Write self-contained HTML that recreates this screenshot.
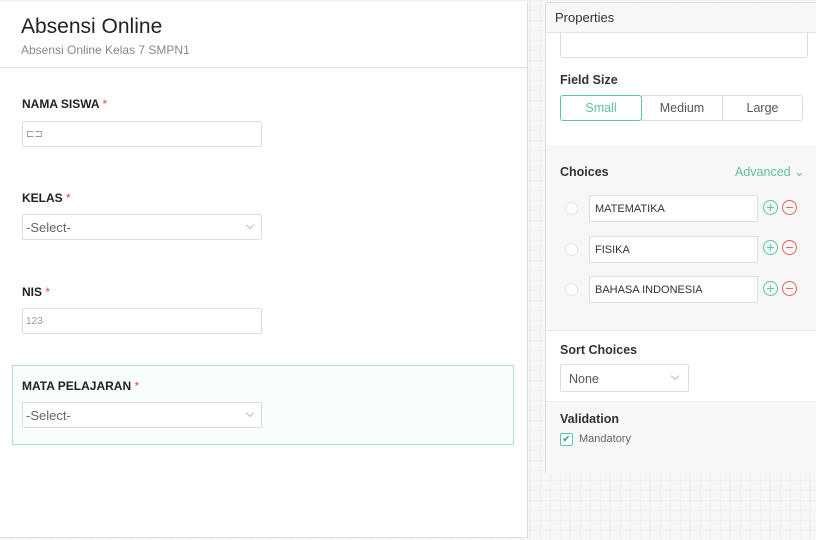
<!DOCTYPE html>
<html><head><style>
*{box-sizing:border-box;margin:0;padding:0}
body{width:816px;height:540px;overflow:hidden;font-family:"Liberation Sans",sans-serif;background:#f7f7f7;
background-image:linear-gradient(#f0f0f0 1px,transparent 1px),linear-gradient(90deg,#f0f0f0 1px,transparent 1px);background-size:10px 10px;position:relative}
.abs{position:absolute}
#left{left:0;top:2px;width:528px;height:536px;background:#fff;border-right:1px solid #ddd;border-bottom:1px solid #ddd}
h1{position:absolute;left:21px;top:13px;font-size:21px;font-weight:normal;color:#222}
.sub{position:absolute;left:21px;top:41px;font-size:12px;color:#888}
.hr{position:absolute;left:0;top:65px;width:527px;border-top:1px solid #ddd}
.lbl{position:absolute;left:22px;font-size:12px;font-weight:bold;color:#222}
.lbl span{color:#e74c3c;font-weight:normal}
.inp{position:absolute;left:22px;width:240px;height:26px;border:1px solid #ddd;border-radius:2px;background:#fff;font-size:13px;color:#777;padding:5px 3px}
.chev{position:absolute;right:8px;top:7px;width:6px;height:6px;border-right:1px solid #bbb;border-bottom:1px solid #bbb;transform:rotate(45deg)}
#hl{left:12px;top:363px;width:502px;height:80px;background:#f7fefd;border:1px solid #a8e4d4}
#right{left:545px;top:2px;width:271px;height:471px;background:#fff;border:1px solid #ddd;border-right:none}
.sec{position:absolute;left:0;width:271px}
.t{position:absolute;left:14px;font-size:13px;color:#333}
.btn{position:absolute;top:92px;height:26px;font-size:12.5px;color:#555;text-align:center;line-height:24px;border:1px solid #ddd;background:#fff}
.ch{position:absolute;left:43px;width:169px;height:27px;border:1px solid #ddd;border-radius:2px;background:#fff;font-size:11px;color:#333;padding:7px 5px}
.rad{position:absolute;left:19px;width:13px;height:13px;border-radius:50%;border:1px solid #e4e4e4;background:#fff}
.ic{position:absolute;width:15px;height:15px;border-radius:50%;font-size:14px;line-height:12px;text-align:center}
</style></head><body>
<div id="left" class="abs">
<h1>Absensi Online</h1>
<div class="sub">Absensi Online Kelas 7 SMPN1</div>
<div class="hr"></div>
<div class="lbl" style="top:95px">NAMA SISWA <span>*</span></div>
<div class="inp" style="top:119px;font-size:10px;padding-top:7px;color:#999">⊏⊐</div>
<div class="lbl" style="top:189px">KELAS <span>*</span></div>
<div class="inp" style="top:212px;color:#666">-Select-<div class="chev"></div></div>
<div class="lbl" style="top:283px">NIS <span>*</span></div>
<div class="inp" style="top:306px;font-size:10px;padding-top:7px;color:#999">123</div>
<div id="hl" class="abs"></div>
<div class="lbl" style="top:377px">MATA PELAJARAN <span>*</span></div>
<div class="inp" style="top:400px;color:#666">-Select-<div class="chev"></div></div>
</div>
<div id="right" class="abs">
<div class="sec" style="top:0;height:30px;background:#f7f7f7;border-bottom:1px solid #e4e4e4"><div class="t" style="left:9px;top:7px;font-size:13px">Properties</div></div>
<div class="abs" style="left:14px;top:29px;width:248px;height:26px;border:1px solid #ddd;border-top:none;border-radius:0 0 3px 3px"></div>
<div class="t" style="top:70px;font-weight:bold;font-size:12.5px">Field Size</div>
<div class="btn" style="left:14px;width:82px;border:1px solid #5fc4a6;border-radius:3px;color:#5fc4a6;z-index:2">Small</div>
<div class="btn" style="left:95px;width:82px">Medium</div>
<div class="btn" style="left:176px;width:81px;border-radius:0 3px 3px 0">Large</div>
<div class="sec" style="top:142px;height:186px;background:#f7f7f7;border-bottom:1px solid #e8e8e8"></div>
<div class="t" style="top:162px;font-weight:bold;font-size:12.5px">Choices</div>
<div class="abs" style="left:189px;top:161px;font-size:12.5px;color:#5fbf9f">Advanced ⌄</div>
<div class="rad" style="top:199px"></div><div class="ch" style="top:192px">MATEMATIKA</div>
<div class="rad" style="top:240px"></div><div class="ch" style="top:233px">FISIKA</div>
<div class="rad" style="top:280px"></div><div class="ch" style="top:273px">BAHASA INDONESIA</div>
<div class="ic" style="left:217px;top:197px;border:1px solid #5fc4a6;color:#5fc4a6">+</div><div class="ic" style="left:236px;top:197px;border:1px solid #e8605a;color:#e8605a">−</div>
<div class="ic" style="left:217px;top:237px;border:1px solid #5fc4a6;color:#5fc4a6">+</div><div class="ic" style="left:236px;top:237px;border:1px solid #e8605a;color:#e8605a">−</div>
<div class="ic" style="left:217px;top:278px;border:1px solid #5fc4a6;color:#5fc4a6">+</div><div class="ic" style="left:236px;top:278px;border:1px solid #e8605a;color:#e8605a">−</div>
<div class="t" style="top:340px;font-weight:bold;font-size:12.5px">Sort Choices</div>
<div class="abs" style="left:14px;top:361px;width:129px;height:28px;border:1px solid #ddd;border-radius:2px;font-size:12.5px;color:#555;padding:7px 8px">None<div class="chev" style="top:8px;right:10px"></div></div>
<div class="sec" style="top:398px;height:72px;background:#f7f7f7;border-top:1px solid #ececec"></div>
<div class="t" style="top:409px;font-weight:bold;font-size:12.5px">Validation</div>
<div class="abs" style="left:14px;top:430px;width:13px;height:13px;border:1px solid #5fc4a6;border-radius:2px;background:#fff;color:#3a9;font-size:10px;line-height:11px;text-align:center">✔</div>
<div class="abs" style="left:33px;top:430px;font-size:11px;color:#666">Mandatory</div>
</div>
</body></html>
